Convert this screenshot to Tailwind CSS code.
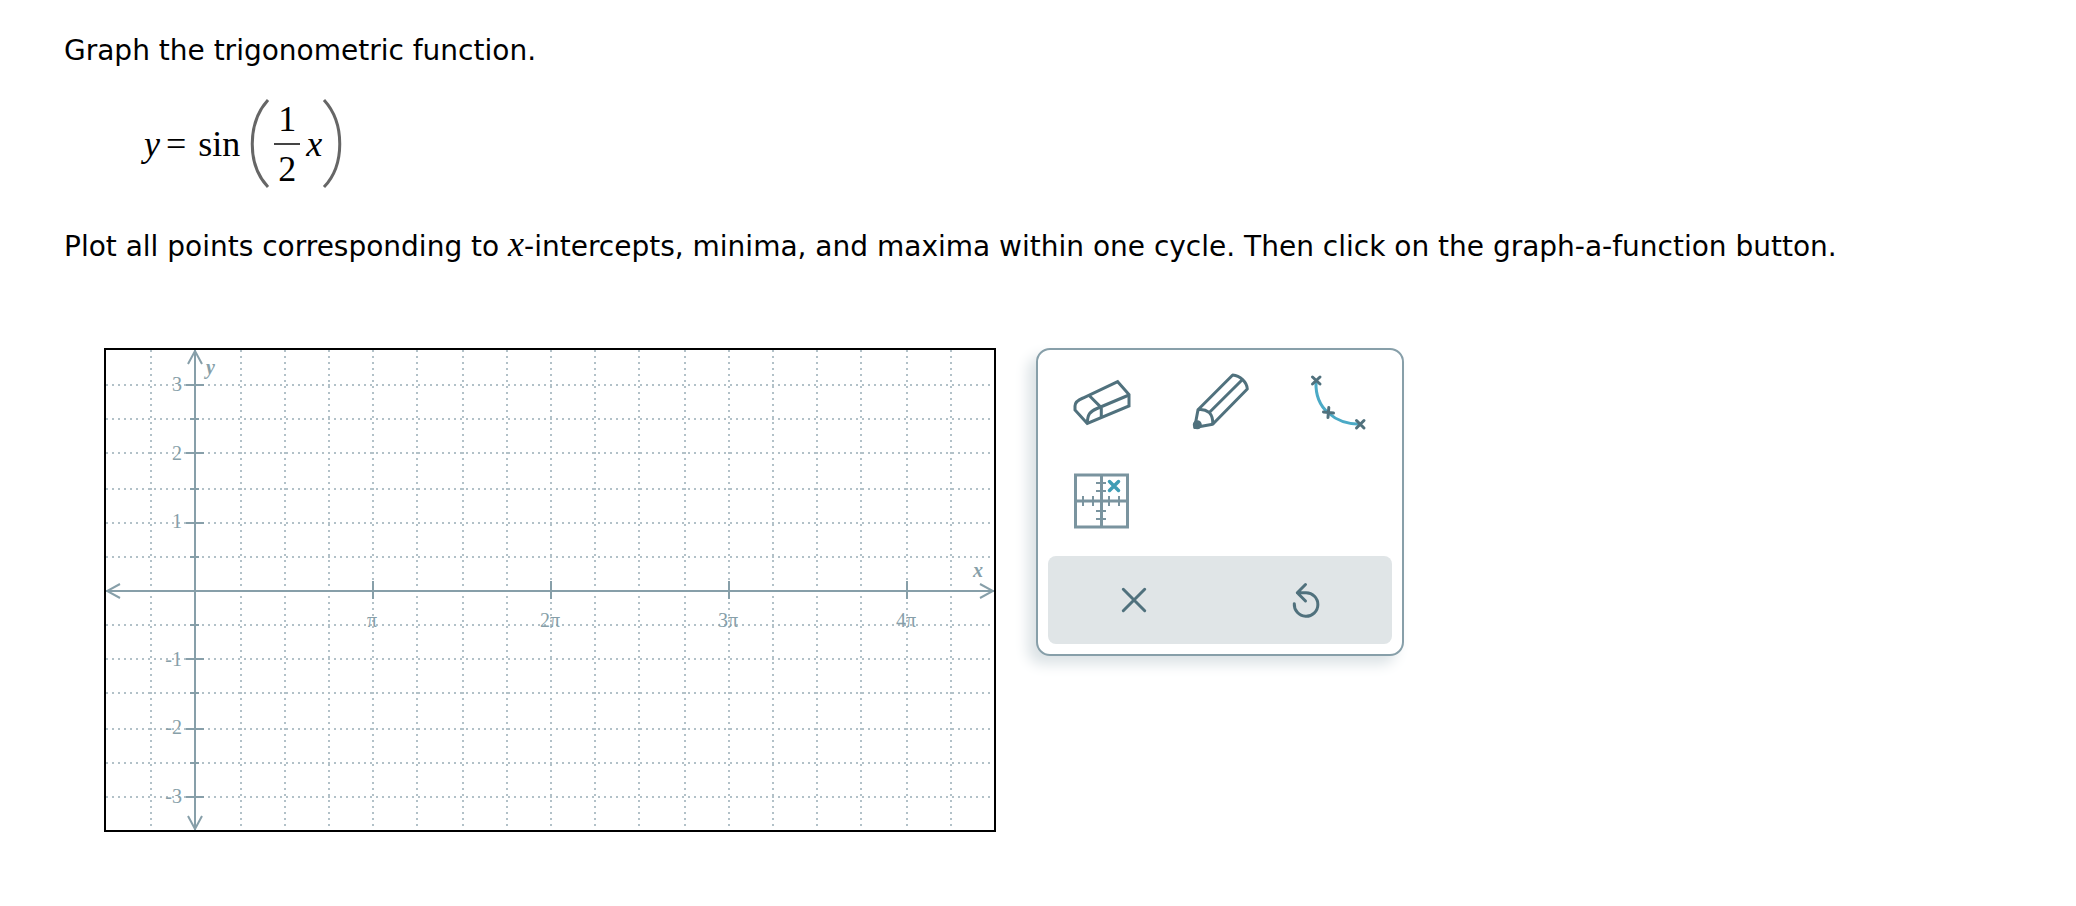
<!DOCTYPE html>
<html lang="en">
<head>
  <meta charset="UTF-8" />
  <meta name="viewport" content="width=device-width, initial-scale=1.0"/>
  <title>Graph the trigonometric function</title>
  <script src="https://cdn.jsdelivr.net/npm/@tailwindcss/browser@4"></script>
</head>
<body class="bg-white text-black font-['Verdana','DejaVu_Sans',sans-serif]">

  <main class="px-16 pt-[31px] pb-16">

    <!-- Question -->
    <p class="text-[28px] leading-10">Graph the trigonometric function.</p>

    <div class="mt-7 ml-20 flex items-center font-['Liberation_Serif',serif] text-[36px] leading-10">
      <span class="italic">y</span>
      <span class="ml-1.5">=</span>
      <span class="ml-3">sin</span>
      <svg class="ml-2.5 h-[90px] w-5" viewBox="0 0 20 90" fill="none" stroke="#666" stroke-width="3" aria-hidden="true">
        <path d="M18 1C-3 24-3 66 18 88"/>
      </svg>
      <span class="ml-1 flex flex-col items-center">
        <span>1</span>
        <span class="my-1 h-0.5 w-[26px] bg-[#444]"></span>
        <span>2</span>
      </span>
      <span class="ml-1.5 italic">x</span>
      <svg class="h-[90px] w-5" viewBox="0 0 20 90" fill="none" stroke="#666" stroke-width="3" aria-hidden="true">
        <path d="M2 1C23 24 23 66 2 88"/>
      </svg>
    </div>

    <p class="mt-[37px] text-[28px] leading-10">Plot all points corresponding to <i class="font-['Liberation_Serif',serif] text-[36px] leading-none">x</i>-intercepts, minima, and maxima within one cycle. Then click on the graph-a-function button.</p>

    <div class="mt-[81px] ml-10 flex items-start gap-10">

      <!-- Graph -->
      <div class="shrink-0 border-2 border-black">
        <svg class="block h-[480px] w-[888px]" viewBox="0 0 888 480" fill="none" role="img" aria-label="Coordinate plane">
          <!-- grid -->
          <g stroke="#b2c1c8" stroke-width="2" stroke-dasharray="2 4">
            <path d="M45 0V480M135 0V480M179 0V480M223 0V480M267 0V480M311 0V480M357 0V480M401 0V480M445 0V480M489 0V480M533 0V480M579 0V480M623 0V480M667 0V480M711 0V480M755 0V480M801 0V480M845 0V480"/>
            <path d="M0 35H888M0 69H888M0 103H888M0 139H888M0 173H888M0 207H888M0 275H888M0 309H888M0 343H888M0 379H888M0 413H888M0 447H888"/>
          </g>
          <!-- axes and ticks -->
          <g stroke="#879fa9" stroke-width="2">
            <path d="M89 0V480M0 241H888"/>
            <path d="M80 35H98M80 103H98M80 173H98M80 309H98M80 379H98M80 447H98"/>
            <path d="M84 69H93M84 139H93M84 207H93M84 275H93M84 343H93M84 413H93"/>
            <path d="M267 231V249M445 231V249M623 231V249M801 231V249"/>
            <path d="M82 14L89 1L96 14M82 466L89 479L96 466M14 234L1 241L14 248M874 234L887 241L874 248"/>
          </g>
          <g fill="#879fa9" font-family="Liberation Serif, serif" font-size="20">
            <g text-anchor="end">
              <text x="76" y="41">3</text>
              <text x="76" y="110">2</text>
              <text x="76" y="178">1</text>
              <text x="76" y="316">-1</text>
              <text x="76" y="384">-2</text>
              <text x="76" y="453">-3</text>
            </g>
            <g text-anchor="middle">
              <text x="266" y="277">π</text>
              <text x="444" y="277">2π</text>
              <text x="622" y="277">3π</text>
              <text x="800" y="277">4π</text>
            </g>
            <g font-style="italic" font-weight="bold">
              <text x="100" y="24">y</text>
              <text x="867" y="227">x</text>
            </g>
          </g>
        </svg>
      </div>

      <!-- Toolbox -->
      <div class="w-[368px] shrink-0 rounded-[14px] border-2 border-[#879fa9] bg-white pt-1 pb-2.5 shadow-[-8px_8px_14px_#dbe2e5]">
        <div class="mx-[5px] grid grid-cols-3 auto-rows-[98px]">
          <button type="button" title="Eraser" class="flex items-center justify-center">
            <svg class="size-[60px]" viewBox="0 0 60 60" fill="none" stroke="#50717d" stroke-width="3">
              <path d="M45.7 8.7L57 21.500V33L15.3 50.500L3 37V33C3 29 6 27 11 25Z"/>
              <path d="M16.7 22L29.3 34.7V45M57 22L25 35.5C18 38.5 15.3 41 15.3 51"/>
            </svg>
          </button>
          <button type="button" title="Pencil" class="flex items-center justify-center">
            <svg class="size-[60px]" viewBox="0 0 60 60" fill="none" stroke="#50717d" stroke-width="3" stroke-linejoin="round">
              <path d="M8 36.7L42.7 2C50 2.500 57 9 57.300 16L22.7 51.300L4.700 54.500Z"/>
              <path d="M8 36.7C12 36 16 37 19.300 39.500C22 42.500 23 47 22.700 51.300M19.300 39.500L52 7"/>
              <circle cx="7.300" cy="51.700" r="3" fill="#50717d"/>
            </svg>
          </button>
          <button type="button" title="Graph a function" class="flex items-center justify-center">
            <svg class="size-[60px]" viewBox="0 0 60 60" fill="none" stroke-width="3" stroke-linecap="round">
              <path stroke="#4baac6" d="M8 9C7.500 23 12 33 20.500 40C28 47 37 51 52 51.300"/>
              <path stroke="#50717d" d="M4.500 4L12 11M12 4L4.500 11M48.500 47.500L56 55M56 47.500L48.500 55M20.800 34.500L20 44.500M15.500 39L25.500 40"/>
            </svg>
          </button>
          <button type="button" title="Graph scale" class="flex items-center justify-center">
            <svg class="size-[60px]" viewBox="0 0 60 60" fill="none" stroke="#7a949f" stroke-width="3">
              <path d="M3.500 4H55.500V56H3.500ZM29.500 4V56M3.500 30H55.500"/>
              <path stroke-width="2" d="M24 12H34M24 20H34M24 40H34M24 48H34M11 25V35M21 25V35M37 25V35M47 25V35"/>
              <path stroke="#3f9db5" stroke-width="3.500" stroke-linecap="round" d="M37.500 10.500L46.500 19.500M46.500 10.500L37.500 19.500"/>
            </svg>
          </button>
        </div>

        <div class="mx-2.5 mt-1.5 grid h-[88px] grid-cols-2 rounded-lg bg-[#e0e5e7]">
          <button type="button" title="Clear" class="flex items-center justify-center">
            <svg class="size-10" viewBox="0 0 40 40" fill="none" stroke="#50717d" stroke-width="3" stroke-linecap="round">
              <path d="M9.300 9.300L30.700 30.700M30.700 9.300L9.300 30.700"/>
            </svg>
          </button>
          <button type="button" title="Undo" class="flex items-center justify-center">
            <svg class="size-10" viewBox="0 0 40 40" fill="none" stroke="#50717d" stroke-width="3" stroke-linecap="round" stroke-linejoin="round">
              <path d="M8.300 23.700A11.800 11.800 0 1 0 20 12.700H11.300M19.500 4.500L11.300 12.700L19.500 21"/>
            </svg>
          </button>
        </div>
      </div>

    </div>
  </main>

</body>
</html>
